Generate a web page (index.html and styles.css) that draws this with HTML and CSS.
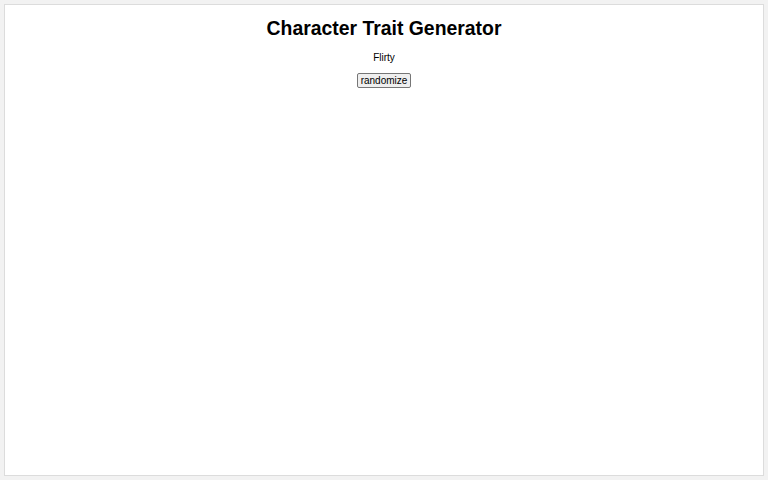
FILE: index.html
```html
<!DOCTYPE html>
<html lang="en">
<head>
<meta charset="utf-8"/>
<title>Character Trait Generator</title>
<link rel="stylesheet" href="styles.css">
</head>
<body>
<div class="panel">
  <h1>Character Trait Generator</h1>
  <p id="trait">Flirty</p>
  <button id="randomize">randomize</button>
</div>
<script>
  const traits = ["Flirty", "Brave", "Shy", "Stubborn", "Curious", "Loyal", "Grumpy", "Cheerful"];
  document.getElementById("randomize").onclick = () => {
    const pick = traits[Math.floor(Math.random() * traits.length)];
    document.getElementById("trait").textContent = pick;
  };
</script>
</body>
</html>
```

FILE: styles.css
```css
body {
  margin: 0;
  padding: 4px;
  background-color: #f2f2f2;
  font-family: 'Liberation Sans', Arial, sans-serif;
}
.panel {
  background: white;
  border: 1px solid #dcdcdc;
  height: 470px;
  text-align: center;
}
h1 {
  font-size: 19.4px;
  margin: 12px 0 0;
}
#trait {
  font-size: 10px;
  margin: 12px 0 7px;
}
#randomize {
  font-family: 'Liberation Sans', Arial, sans-serif;
  font-size: 10px;
  padding: 1px 3px;
  background: #efefef;
  border: 1px solid #767676;
  border-radius: 2px;
}
```
